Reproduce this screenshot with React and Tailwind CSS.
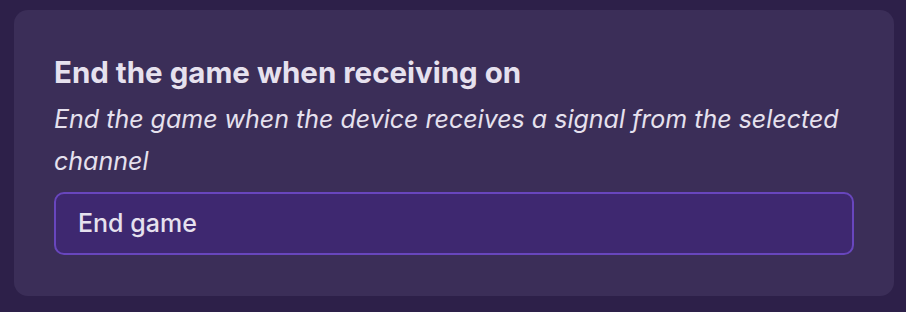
export default function App() {
  return (
    <div
      className="w-[906px] h-[312px] bg-[#2d2049] pt-[10px] pl-[14px] pr-[12px]"
      style={{ fontFamily: 'Inter, "Noto Sans", sans-serif' }}
    >
      <div className="h-[286px] rounded-[14px] bg-[#3b2e58] px-[40px] pt-[44px]">
        <h2 className="text-[29.5px] leading-[36px] font-bold text-[#e6e1ee]">
          End the game when receiving on
        </h2>
        <p className="mt-[8px] text-[25px] leading-[42px] italic text-[#e6e1ee]">
          End the game when the device receives a signal from the selected channel
        </p>
        <div className="mt-[10px] h-[63px] rounded-[10px] border-2 border-[#6846bd] bg-[#3e2870] flex items-center px-[22px]">
          <span className="text-[25px] font-medium text-[#e6e1ee]">End game</span>
        </div>
      </div>
    </div>
  );
}
